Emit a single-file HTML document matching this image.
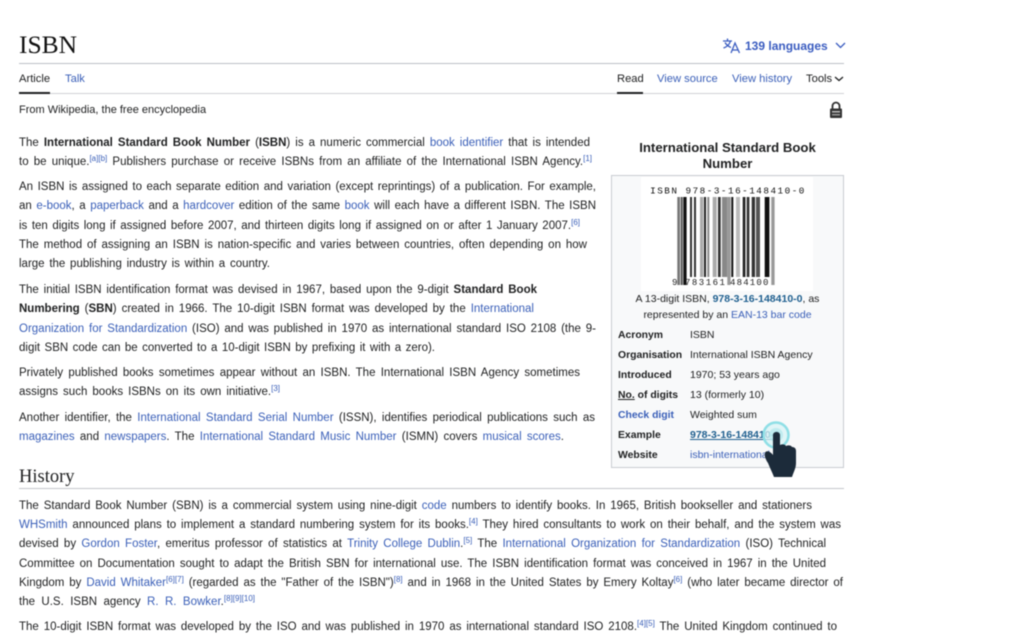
<!DOCTYPE html>
<html lang="en"><head><meta charset="utf-8"><title>ISBN</title>
<style>
html,body{margin:0;padding:0;background:#fff}
#p{position:relative;width:1020px;height:638px;overflow:hidden;background:#fff;font-family:"Liberation Sans",sans-serif;font-size:11.5px;color:#202122;filter:blur(.5px)}
.l,.t{position:absolute;white-space:nowrap;line-height:14px;height:14px}
.l{text-align:justify;text-align-last:justify;white-space:normal;overflow:visible;margin-top:1px}
a{color:#3a5fb8;text-decoration:none}
sup{font-size:8px;line-height:0;vertical-align:baseline;position:relative;top:-4px;color:#3a5fb8}
.r{position:absolute}
b{font-weight:bold}
.k{font-weight:bold;font-size:10.4px;left:618px;margin-top:1px}
.v{font-size:10.5px;left:690px}
.n{font-size:11.2px;margin-top:1px}
.ser{font-family:"Liberation Serif",serif;color:#202122}
</style></head><body><div id="p">
<div class="t ser" style="left:19px;top:31px;font-size:25.5px;line-height:28px;height:28px;color:#111">ISBN</div>
<svg class="r" style="left:722px;top:37px" width="20" height="17" viewBox="0 0 20 17" fill="none" stroke="#3a5cc0" stroke-width="1.3"><path d="M1 4H10M5.5 1.500V4M8.500 4C7.500 7.500 4.500 10 1.500 11M3 5.500C4.500 8 6.500 9.500 9 10.500M9 16L13 6L17.500 16M10.500 13H16"/></svg>
<div class="t" style="left:745px;top:39px;font-size:12px;font-weight:bold;color:#3a5cc0">139 languages</div>
<svg class="r" style="left:835px;top:42px" width="11" height="7" viewBox="0 0 11 7" fill="none" stroke="#3a5cc0" stroke-width="1.300"><path d="M1 1L5.500 5.500L10 1"/></svg>
<div class="r" style="left:19px;top:63px;width:825px;height:1px;background:#bdbfc7"></div>
<div class="t n" style="left:19px;top:71px">Article</div>
<div class="t n" style="left:65px;top:71px;color:#3a5fb8">Talk</div>
<div class="t n" style="left:617px;top:71px">Read</div>
<div class="t n" style="left:657px;top:71px;color:#3a5fb8">View source</div>
<div class="t n" style="left:732px;top:71px;color:#3a5fb8">View history</div>
<div class="t n" style="left:806px;top:71px">Tools</div>
<svg class="r" style="left:834px;top:76px" width="10" height="6" viewBox="0 0 10 6" fill="none" stroke="#202122" stroke-width="1.300"><path d="M1 1L5 4.500L9 1"/></svg>
<div class="r" style="left:19px;top:93px;width:825px;height:1px;background:#d0d1d6"></div>
<div class="r" style="left:19px;top:92px;width:31px;height:2px;background:#202122"></div>
<div class="r" style="left:617px;top:92px;width:26px;height:2px;background:#202122"></div>
<div class="t" style="left:19px;top:103px;font-size:11px">From Wikipedia, the free encyclopedia</div>
<svg class="r" style="left:829px;top:101px" width="14" height="18" viewBox="0 0 14 18"><path d="M3.500 8V5A3.500 3.500 0 0 1 10.500 5V8" fill="none" stroke="#333" stroke-width="1.800"/><rect x="1" y="7.500" width="12" height="9.500" rx="1" fill="#333"/><rect x="3" y="10" width="8" height="1.500" fill="#bbb"/><rect x="3" y="13" width="8" height="1.500" fill="#999"/></svg>

<div class="l" style="left:19px;top:135px;width:571px">The <b>International Standard Book Number</b> (<b>ISBN</b>) is a numeric commercial <a>book identifier</a> that is intended</div>
<div class="l" style="left:19px;top:154px;width:573px">to be unique.<sup>[a][b]</sup> Publishers purchase or receive ISBNs from an affiliate of the International ISBN Agency.<sup>[1]</sup></div>
<div class="l" style="left:19px;top:179px;width:577px">An ISBN is assigned to each separate edition and variation (except reprintings) of a publication. For example,</div>
<div class="l" style="left:19px;top:198px;width:577px">an <a>e-book</a>, a <a>paperback</a> and a <a>hardcover</a> edition of the same <a>book</a> will each have a different ISBN. The ISBN</div>
<div class="l" style="left:19px;top:218px;width:561px">is ten digits long if assigned before 2007, and thirteen digits long if assigned on or after 1 January 2007.<sup>[6]</sup></div>
<div class="l" style="left:19px;top:237px;width:568px">The method of assigning an ISBN is nation-specific and varies between countries, often depending on how</div>
<div class="l" style="left:19px;top:256px;width:251px">large the publishing industry is within a country.</div>
<div class="l" style="left:19px;top:282px;width:518px">The initial ISBN identification format was devised in 1967, based upon the 9-digit <b>Standard Book</b></div>
<div class="l" style="left:19px;top:301px;width:515px"><b>Numbering</b> (<b>SBN</b>) created in 1966. The 10-digit ISBN format was developed by the <a>International</a></div>
<div class="l" style="left:19px;top:321px;width:577px"><a>Organization for Standardization</a> (ISO) and was published in 1970 as international standard ISO 2108 (the 9-</div>
<div class="l" style="left:19px;top:340px;width:416px">digit SBN code can be converted to a 10-digit ISBN by prefixing it with a zero).</div>
<div class="l" style="left:19px;top:365px;width:561px">Privately published books sometimes appear without an ISBN. The International ISBN Agency sometimes</div>
<div class="l" style="left:19px;top:384px;width:261px">assigns such books ISBNs on its own initiative.<sup>[3]</sup></div>
<div class="l" style="left:19px;top:410px;width:576px">Another identifier, the <a>International Standard Serial Number</a> (ISSN), identifies periodical publications such as</div>
<div class="l" style="left:19px;top:429px;width:545px"><a>magazines</a> and <a>newspapers</a>. The <a>International Standard Music Number</a> (ISMN) covers <a>musical scores</a>.</div>

<div class="t ser" style="left:19px;top:466px;font-size:18.5px;line-height:22px;height:22px">History</div>
<div class="r" style="left:19px;top:488px;width:825px;height:1px;background:#c4c6cb"></div>
<div class="l" style="left:19px;top:498px;width:793px">The Standard Book Number (SBN) is a commercial system using nine-digit <a>code</a> numbers to identify books. In 1965, British bookseller and stationers</div>
<div class="l" style="left:19px;top:517px;width:822px"><a>WHSmith</a> announced plans to implement a standard numbering system for its books.<sup>[4]</sup> They hired consultants to work on their behalf, and the system was</div>
<div class="l" style="left:19px;top:536px;width:807px">devised by <a>Gordon Foster</a>, emeritus professor of statistics at <a>Trinity College Dublin</a>.<sup>[5]</sup> The <a>International Organization for Standardization</a> (ISO) Technical</div>
<div class="l" style="left:19px;top:556px;width:807px">Committee on Documentation sought to adapt the British SBN for international use. The ISBN identification format was conceived in 1967 in the United</div>
<div class="l" style="left:19px;top:575px;width:824px">Kingdom by <a>David Whitaker</a><sup>[6][7]</sup> (regarded as the "Father of the ISBN")<sup>[8]</sup> and in 1968 in the United States by Emery Koltay<sup>[6]</sup> (who later became director of</div>
<div class="l" style="left:19px;top:594px;width:236px">the U.S. ISBN agency <a>R. R. Bowker</a>.<sup>[8][9][10]</sup></div>
<div class="l" style="left:19px;top:619px;width:818px">The 10-digit ISBN format was developed by the ISO and was published in 1970 as international standard ISO 2108.<sup>[4][5]</sup> The United Kingdom continued to</div>

<div class="t" style="left:611px;width:233px;top:140px;text-align:center;font-weight:bold;font-size:13.2px;line-height:16px;height:32px;white-space:normal">International Standard Book<br>Number</div>
<div class="r" style="left:611px;top:175px;width:231px;height:291px;background:#f8f9fa;border:1px solid #c8ccd1"></div>
<svg class="r" style="left:641px;top:177px" width="172" height="114" viewBox="0 0 172 114">
<rect width="172" height="114" fill="#fff"/>
<text x="87" y="16.500" text-anchor="middle" font-family="Liberation Mono,monospace" font-size="9.300" letter-spacing="1.500" fill="#111">ISBN 978-3-16-148410-0</text>
<g>
<rect x="36.300" y="20" width="2.700" height="88" fill="#777"/>
<rect x="39.700" y="20" width="2" height="88" fill="#555"/>
<rect x="42.300" y="20" width="3.300" height="88" fill="#111"/>
<rect x="49" y="20" width="2" height="80" fill="#333"/>
<rect x="53" y="20" width="2" height="80" fill="#333"/>
<rect x="59" y="20" width="3.300" height="80" fill="#aaa"/>
<rect x="63" y="20" width="2" height="80" fill="#222"/>
<rect x="66.300" y="20" width="2" height="80" fill="#888"/>
<rect x="71.700" y="20" width="4" height="80" fill="#aaa"/>
<rect x="77" y="20" width="2.700" height="80" fill="#333"/>
<rect x="81" y="20" width="5.300" height="80" fill="#888"/>
<rect x="86.300" y="20" width="3.300" height="88" fill="#999"/>
<rect x="90.300" y="20" width="2" height="80" fill="#111"/>
<rect x="95" y="20" width="4" height="80" fill="#bbb"/>
<rect x="101.700" y="20" width="2.700" height="80" fill="#222"/>
<rect x="105.700" y="20" width="2.700" height="80" fill="#333"/>
<rect x="110.700" y="20" width="3.300" height="80" fill="#333"/>
<rect x="115" y="20" width="4" height="80" fill="#555"/>
<rect x="123.700" y="20" width="4.700" height="80" fill="#111"/>
<rect x="130.300" y="20" width="3.300" height="88" fill="#999"/>
</g>
<text x="31" y="108" font-family="Liberation Mono,monospace" font-size="9" fill="#222">9</text>
<text x="44" y="108" font-family="Liberation Mono,monospace" font-size="9" letter-spacing="1.500" fill="#222">783161</text>
<text x="89" y="108" font-family="Liberation Mono,monospace" font-size="9" letter-spacing="1.200" fill="#222">484100</text>
</svg>
<div class="t" style="left:611px;width:233px;top:292px;text-align:center;font-size:10.5px">A 13-digit ISBN, <b style="color:#1f5f8f">978-3-16-148410-0</b>, as</div>
<div class="t" style="left:611px;width:233px;top:308px;text-align:center;font-size:10.5px">represented by an <a>EAN-13 bar code</a></div>
<div class="t k" style="top:328px">Acronym</div><div class="t v" style="top:328px">ISBN</div>
<div class="t k" style="top:348px">Organisation</div><div class="t v" style="top:348px">International ISBN Agency</div>
<div class="t k" style="top:368px">Introduced</div><div class="t v" style="top:368px">1970; 53 years ago</div>
<div class="t k" style="top:388px"><u>No.</u> of digits</div><div class="t v" style="top:388px">13 (formerly 10)</div>
<div class="t k" style="top:408px;color:#3a5fb8">Check digit</div><div class="t v" style="top:408px">Weighted sum</div>
<div class="t k" style="top:428px">Example</div><div class="t v" style="top:428px;color:#1f5f8f;font-weight:bold"><u>978-3-16-148410-0</u></div>
<div class="t k" style="top:448px">Website</div><div class="t v" style="top:448px;color:#3a5fb8">isbn-international.org</div>
<svg class="r" style="left:755px;top:418px" width="50" height="64" viewBox="755 418 50 64">
<circle cx="776" cy="435" r="12.500" fill="#d8f3f6" fill-opacity=".75" stroke="#8fdfe6" stroke-width="2.500"/>
<circle cx="776" cy="435" r="7" fill="#a8e4ea" fill-opacity=".6"/>
<path d="M773 435C773 431 780 431 780 435V445C782 444 785 444 786 446C788 445 791 445 792 447C794 447 796 448 796 451V463C796 468 794 471 792 477H774C772 472 770 468 768 463C766 460 764 456 765 453C766 450 770 451 773 455Z" fill="#1c2b3a"/>
</svg>
</div></body></html>
